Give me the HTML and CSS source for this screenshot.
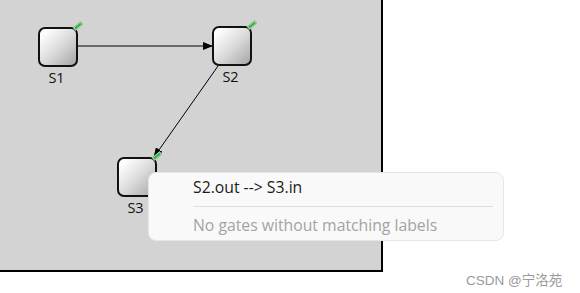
FILE: index.html
```html
<!DOCTYPE html>
<html lang="en">
<head>
    <meta charset="UTF-8">
    <title>Gate connections</title>
    <link rel="stylesheet" href="styles.css">
</head>
<body>
    <div class="canvas">
        <svg class="edges" width="381" height="270">
            <defs>
                <marker id="tip" markerWidth="10" markerHeight="8" refX="9" refY="4" orient="auto" markerUnits="userSpaceOnUse">
                    <path d="M0,0 L10,4 L0,8 z" fill="#000"/>
                </marker>
            </defs>
            <line x1="78" y1="46" x2="212" y2="46" stroke="#000" stroke-width="1" marker-end="url(#tip)"/>
            <line x1="218" y1="66" x2="154" y2="157" stroke="#000" stroke-width="1" marker-end="url(#tip)"/>
        </svg>

        <div class="node n1">
            <div class="box"><span class="pin"></span></div>
            <div class="label">S1</div>
        </div>
        <div class="node n2">
            <div class="box"><span class="pin"></span></div>
            <div class="label">S2</div>
        </div>
        <div class="node n3">
            <div class="box"><span class="pin"></span></div>
            <div class="label">S3</div>
        </div>
    </div>

    <div class="menu">
        <div class="menu-item">S2.out --&gt; S3.in</div>
        <div class="menu-sep"></div>
        <div class="menu-item disabled">No gates without matching labels</div>
    </div>

    <div class="mark">CSDN @宁洛苑</div>
</body>
</html>
```

FILE: styles.css
```css
body {
    margin: 0;
    background: #fff;
    font-family: "Open Sans", "Noto Sans", sans-serif;
}
.canvas {
    position: relative;
    width: 381px;
    height: 270px;
    background: #d3d3d3;
    border-right: 2px solid #000;
    border-bottom: 2px solid #000;
}
.edges {
    position: absolute;
    left: 0;
    top: 0;
}
.node {
    position: absolute;
    width: 40px;
}
.n1 { left: 38px; top: 27px; }
.n2 { left: 212px; top: 26px; }
.n3 { left: 117px; top: 157px; }

.box {
    position: relative;
    width: 36px;
    height: 36px;
    border: 2px solid #111;
    border-radius: 7px;
    background: linear-gradient(135deg, #ffffff 10%, #d8d8d8 55%, #a6a6a6 100%);
}
.pin {
    position: absolute;
    right: -7px;
    top: -5px;
    width: 8px;
    height: 2px;
    background: #3faa4a;
    border: 1px solid #9ad8a0;
    transform: rotate(-40deg);
}
.label {
    margin-top: 1px;
    margin-left: -3px;
    text-align: center;
    font-size: 14.5px;
    line-height: 19px;
    color: #111;
}

.menu {
    position: absolute;
    left: 148px;
    top: 172px;
    width: 356px;
    height: 69px;
    background: #f9f9f9;
    border: 1px solid #e6e6e6;
    border-radius: 8px;
    box-sizing: border-box;
    padding: 3px 10px 0 44px;
}
.menu-item {
    font-size: 15.75px;
    line-height: 22px;
    color: #1b1b1b;
}
.menu-item.disabled {
    color: #a3a3a3;
    margin-top: 7px;
}
.menu-sep {
    height: 1px;
    background: #dedede;
    margin-top: 8px;
}

.mark {
    position: absolute;
    left: 466px;
    top: 269px;
    font-family: "Liberation Sans", "Noto Sans CJK SC", sans-serif;
    font-size: 13.5px;
    color: #9a9a9a;
}
```
